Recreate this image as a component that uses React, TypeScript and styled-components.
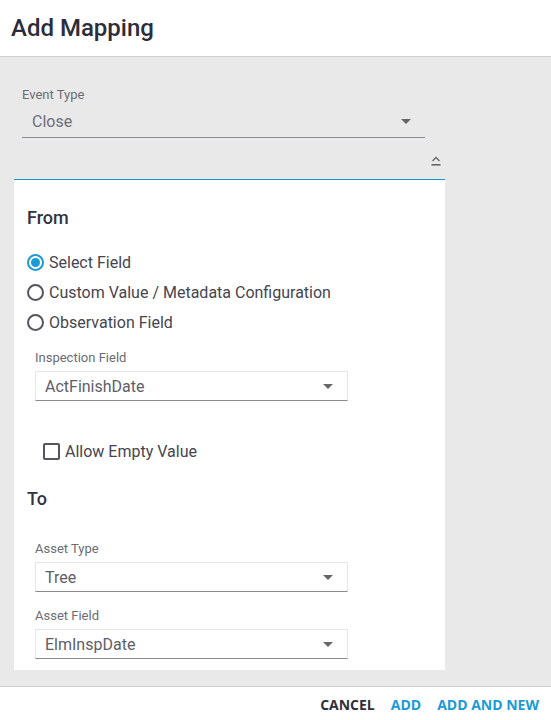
import React from "react";
import styled, { createGlobalStyle } from "styled-components";

const Global = createGlobalStyle`
  html, body { margin: 0; padding: 0; background: #fff; }
  body { font-family: Roboto, "Liberation Sans", sans-serif; }
  * { box-sizing: border-box; }
`;

const Dialog = styled.div`
  width: 551px;
  height: 720px;
  display: flex;
  flex-direction: column;
  background: #fff;
`;

const Header = styled.div`
  height: 57px;
  border-bottom: 1px solid #cfcfcf;
  padding: 12px 0 0 11px;
`;

const Title = styled.h1`
  margin: 0;
  font-family: Roboto, sans-serif;
  font-weight: 500;
  font-size: 24px;
  line-height: 32px;
  color: #2c2c3a;
`;

const Body = styled.div`
  height: 630px;
  background: #e9e9e9;
  border-bottom: 1px solid #cfcfcf;
  padding: 30px 0 0 14px;
`;

const EventField = styled.div`
  margin-left: 8px;
  width: 403px;
`;

const Label = styled.div<{ $mb?: number }>`
  font-size: 13px;
  line-height: 16px;
  color: #6b6b75;
  margin-bottom: ${(p) => p.$mb ?? 5}px;
`;

const UnderlineSelect = styled.div`
  height: 28px;
  display: flex;
  align-items: center;
  justify-content: space-between;
  padding: 0 14px 4px 10px;
  border-bottom: 1px solid #8a8a92;
  font-size: 16px;
  color: #6e6e78;
`;

const Caret = styled.span`
  width: 0;
  height: 0;
  border-left: 5px solid transparent;
  border-right: 5px solid transparent;
  border-top: 5px solid #666;
`;

const CollapseRow = styled.div`
  width: 431px;
  height: 42px;
  display: flex;
  justify-content: flex-end;
  align-items: center;
  padding: 4px 3px 0 0;
  border-bottom: 1px solid #1f93c8;
`;

const Panel = styled.div`
  width: 431px;
  height: 490px;
  background: #fff;
  padding: 25px 0 0 13px;
`;

const SectionTitle = styled.h2<{ $mt?: number }>`
  margin: ${(p) => p.$mt ?? 0}px 0 0 0;
  font-size: 18px;
  font-weight: 500;
  line-height: 26px;
  color: #333340;
`;

const RadioGroup = styled.div`
  margin-top: 16px;
  display: flex;
  flex-direction: column;
`;

const RadioRow = styled.label`
  height: 30px;
  display: flex;
  align-items: center;
  gap: 5px;
  font-size: 16px;
  color: #45454f;
`;

const RadioCircle = styled.span<{ $on?: boolean }>`
  width: 17px;
  height: 17px;
  border-radius: 50%;
  border: 2px solid ${(p) => (p.$on ? "#1a9ad6" : "#55555f")};
  display: flex;
  align-items: center;
  justify-content: center;
  &::after {
    content: "";
    display: ${(p) => (p.$on ? "block" : "none")};
    width: 9px;
    height: 9px;
    border-radius: 50%;
    background: #1a9ad6;
  }
`;

const BoxField = styled.div<{ $mt?: number }>`
  margin: ${(p) => p.$mt ?? 0}px 0 0 8px;
  width: 313px;
`;

const BoxSelect = styled.div`
  height: 30px;
  background: #fff;
  border: 1px solid #e6e6e6;
  border-bottom: 1px solid #8a8a92;
  display: flex;
  align-items: center;
  justify-content: space-between;
  padding: 0 14px 0 9px;
  font-size: 16px;
  color: #5e5e68;
`;

const CheckRow = styled.label`
  margin: 41px 0 0 16px;
  display: flex;
  align-items: center;
  gap: 5px;
  font-size: 16px;
  color: #45454f;
`;

const CheckBox = styled.span`
  width: 17px;
  height: 17px;
  border: 2px solid #55555f;
  border-radius: 2px;
`;

const Footer = styled.div`
  flex: 1;
  display: flex;
  justify-content: flex-end;
  align-items: center;
  gap: 16px;
  padding: 2px 12px 0 0;
`;

const Button = styled.button<{ $primary?: boolean }>`
  background: none;
  border: none;
  padding: 0;
  font-family: "Open Sans", sans-serif;
  font-weight: 700;
  font-size: 14px;
  color: ${(p) => (p.$primary ? "#1a9ad6" : "#2f2f3c")};
  cursor: pointer;
`;

const CollapseIcon = () => (
  <svg width="12" height="12" viewBox="0 0 12 12">
    <path d="M2.5 6 L6 2.5 L9.5 6" fill="none" stroke="#666" strokeWidth="1.3" />
    <rect x="1.5" y="9" width="9" height="1.6" fill="#666" />
  </svg>
);

export default function App() {
  return (
    <>
      <Global />
      <Dialog>
        <Header>
          <Title>Add Mapping</Title>
        </Header>
        <Body>
          <EventField>
            <Label $mb={7}>Event Type</Label>
            <UnderlineSelect>
              <span>Close</span>
              <Caret />
            </UnderlineSelect>
          </EventField>
          <CollapseRow>
            <CollapseIcon />
          </CollapseRow>
          <Panel>
            <SectionTitle>From</SectionTitle>
            <RadioGroup>
              <RadioRow>
                <RadioCircle $on />
                Select Field
              </RadioRow>
              <RadioRow>
                <RadioCircle />
                Custom Value / Metadata Configuration
              </RadioRow>
              <RadioRow>
                <RadioCircle />
                Observation Field
              </RadioRow>
            </RadioGroup>
            <BoxField $mt={13}>
              <Label>Inspection Field</Label>
              <BoxSelect>
                <span>ActFinishDate</span>
                <Caret />
              </BoxSelect>
            </BoxField>
            <CheckRow>
              <CheckBox />
              Allow Empty Value
            </CheckRow>
            <SectionTitle $mt={25}>To</SectionTitle>
            <BoxField $mt={29}>
              <Label>Asset Type</Label>
              <BoxSelect>
                <span>Tree</span>
                <Caret />
              </BoxSelect>
            </BoxField>
            <BoxField $mt={16}>
              <Label>Asset Field</Label>
              <BoxSelect>
                <span>ElmInspDate</span>
                <Caret />
              </BoxSelect>
            </BoxField>
          </Panel>
        </Body>
        <Footer>
          <Button>CANCEL</Button>
          <Button $primary>ADD</Button>
          <Button $primary>ADD AND NEW</Button>
        </Footer>
      </Dialog>
    </>
  );
}
